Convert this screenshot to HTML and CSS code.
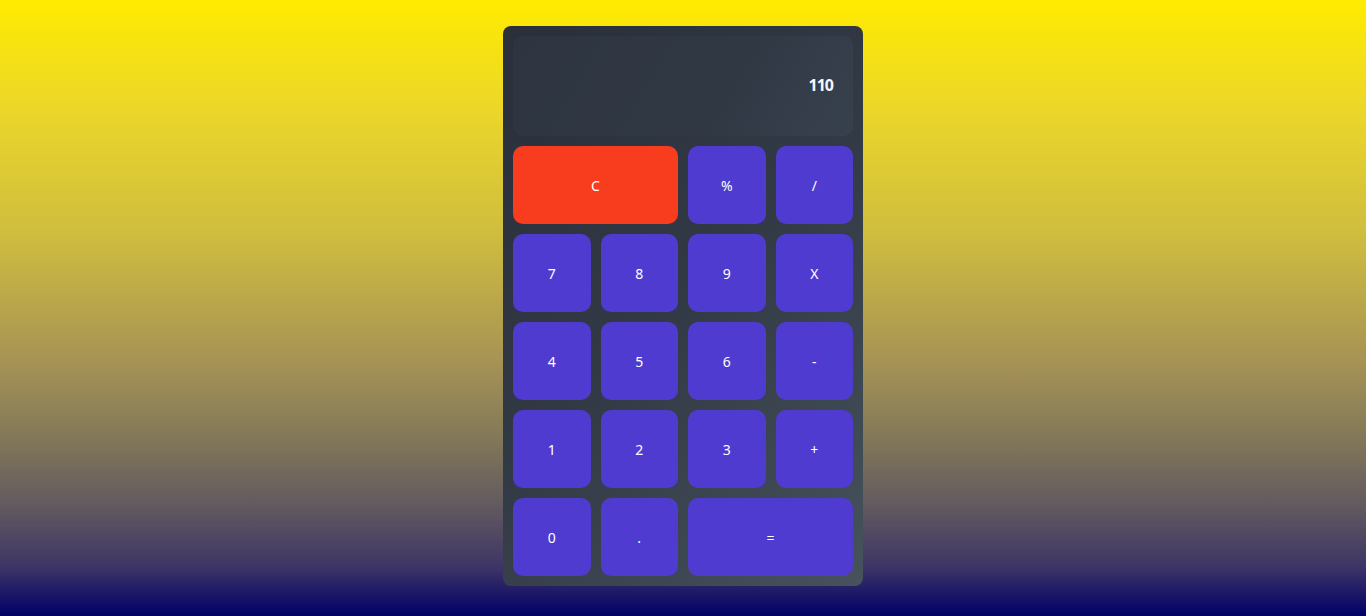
FILE: index.html
```html
<!DOCTYPE html>
<html lang="en">
<head>
<meta charset="utf-8">
<title>Calculator</title>
<link rel="stylesheet" href="styles.css">
</head>
<body>
<div class="calc">
  <div class="display">110</div>
  <div class="keys">
    <button class="key key-clear span2">C</button>
    <button class="key">%</button>
    <button class="key">/</button>
    <button class="key">7</button>
    <button class="key">8</button>
    <button class="key">9</button>
    <button class="key">X</button>
    <button class="key">4</button>
    <button class="key">5</button>
    <button class="key">6</button>
    <button class="key">-</button>
    <button class="key">1</button>
    <button class="key">2</button>
    <button class="key">3</button>
    <button class="key">+</button>
    <button class="key">0</button>
    <button class="key">.</button>
    <button class="key span2">=</button>
  </div>
</div>
</body>
</html>
```
FILE: styles.css
```css
html, body {
  margin: 0;
  height: 616px;
}
body {
  font-family: "Noto Sans", "DejaVu Sans", sans-serif;
  background: linear-gradient(to bottom,
    #ffeb00 0%,
    #ebd62a 18%,
    #cfbd3f 38%,
    #a89454 58%,
    #857b58 70%,
    #625a5f 82%,
    #3e3566 92%,
    #000066 100%);
  display: flex;
  justify-content: center;
  align-items: flex-start;
}
.calc {
  margin-top: 26px;
  width: 360px;
  box-sizing: border-box;
  padding: 10px;
  border-radius: 8px;
  background: linear-gradient(135deg, #2a2f3a 0%, #323a45 50%, #46525c 100%);
  display: flex;
  flex-direction: column;
  gap: 10px;
}
.display {
  height: 100px;
  border-radius: 10px;
  background: linear-gradient(120deg, #2e3541 0%, #303844 60%, #37414d 100%);
  color: #f4f6ff;
  font-weight: 700;
  font-size: 16px;
  letter-spacing: -1px;
  display: flex;
  align-items: center;
  justify-content: flex-end;
  padding-right: 20px;
  padding-bottom: 2px;
  box-sizing: border-box;
}
.keys {
  display: grid;
  grid-template-columns: repeat(4, 1fr);
  grid-auto-rows: 78px;
  gap: 10px;
}
.key {
  border: none;
  border-radius: 10px;
  background: #503bd0;
  color: #ffffff;
  font-family: "Noto Sans", "DejaVu Sans", sans-serif;
  font-size: 14px;
  padding: 0;
}
.key-clear {
  background: #f73d1e;
}
.span2 {
  grid-column: span 2;
}
```
